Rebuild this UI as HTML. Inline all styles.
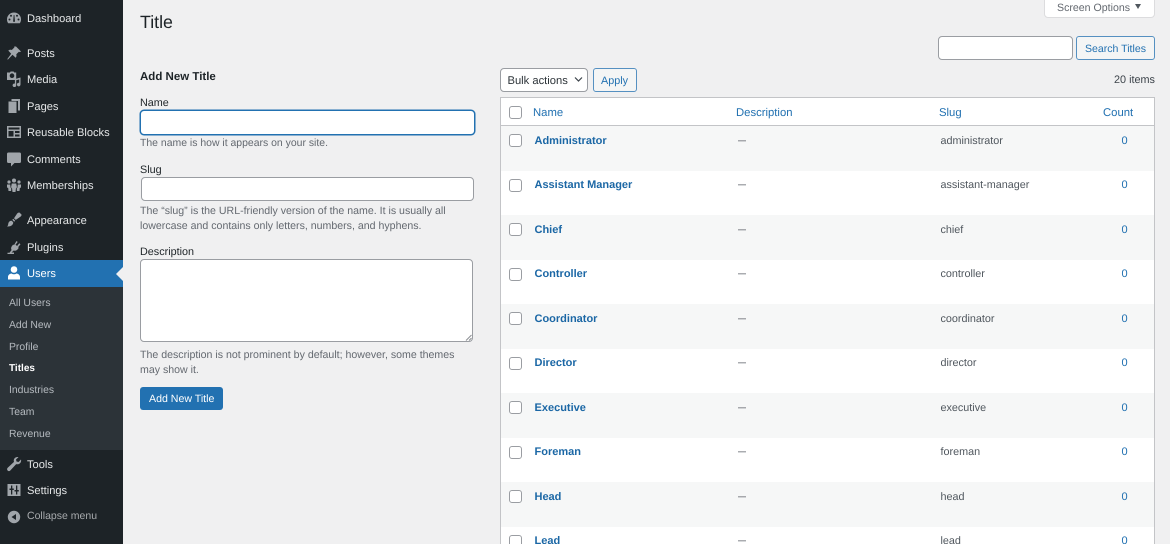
<!DOCTYPE html>
<html lang="en">
<head>
<meta charset="utf-8">
<title>Title</title>
<style>
html,body{margin:0;padding:0;width:1170px;height:544px;overflow:hidden;background:#f0f0f1;font-family:"Liberation Sans",sans-serif;color:#3c434a}
*{box-sizing:border-box}
#wrap{position:relative;width:1170px;height:544px;overflow:hidden;background:#f0f0f1;text-rendering:geometricPrecision;filter:blur(.35px)}
.t{position:absolute;white-space:nowrap;line-height:14px;font-size:11px;margin-top:1px}
#side{position:absolute;left:0;top:0;width:123px;height:544px;background:#1d2327}
#sub{position:absolute;left:0;top:287px;width:123px;height:163px;background:#2c3338}
#cur{position:absolute;left:0;top:260px;width:123px;height:27px;background:#2271b1}
#arrow{position:absolute;left:116px;top:267px;width:0;height:0;border:7px solid transparent;border-left:0;border-right:7px solid #f0f0f1}
.m{color:#e4e6e7;font-size:11.1px;left:27px}
.s{color:#b4b9be;font-size:10.4px;left:9px}
svg.i{position:absolute;left:6px;width:16px;height:16px;fill:#a0a5aa}
.box{position:absolute;background:#fff;border:1px solid #9a9da2;border-radius:4px}
.h{color:#646970;font-size:10.6px}
.lab{color:#1d2327;font-size:10.8px}
#tbl{position:absolute;left:500px;top:97px;width:655px;height:460px;background:#fff;border:1px solid #c3c4c7}
#hd{position:absolute;left:0;top:0;width:653px;height:28px;border-bottom:1px solid #c3c4c7;background:#fff}
.alt{position:absolute;left:501px;width:653px;height:44.5px;background:#f6f7f7}
.cb{position:absolute;left:509px;width:13px;height:13px;background:#fff;border:1px solid #9a9da2;border-radius:3px}
.n{left:534.5px;color:#1b67a5;font-weight:bold;font-size:11px}
.d{left:738px;color:#646970;font-size:8px;font-weight:bold}
.g{left:940.5px;color:#50575e;font-size:10.8px}
.c{left:1121.5px;color:#2271b1;font-size:11px}
.hl{color:#2271b1;font-size:11.3px}
</style>
</head>
<body>
<div id="wrap">
<div id="side"></div>
<div id="sub"></div>
<div id="cur"></div>
<div id="arrow"></div>

<svg class="i" style="top:10px" viewBox="0 0 16 16"><path d="M8 2.500A7 7 0 0 0 1 9.500c0 1.500.4 2.700 1.200 3.700h11.600c.8-1 1.200-2.200 1.200-3.700a7 7 0 0 0-7-7zM3.500 10.500a1 1 0 1 1 0-2 1 1 0 0 1 0 2zM5 6.800a1 1 0 1 1 0-2 1 1 0 0 1 0 2zM9 11.800H7.100L7.700 5h.7zM11 6.800a1 1 0 1 1 0-2 1 1 0 0 1 0 2zM12.500 10.500a1 1 0 1 1 0-2 1 1 0 0 1 0 2z" fill-rule="evenodd"/></svg>
<div class="t m" style="top:11px">Dashboard</div>

<svg class="i" style="top:45px" viewBox="0 0 16 16"><path d="M10 1.500l5 5-1.200.6-.9-.4-2.600 2.600c.4 1.300.2 2.600-.6 3.500L6.500 9.700 2 14.500l-.8-.3 4-5.400L2.300 5.600c.9-.8 2.200-1 3.500-.6l2.600-2.600-.2-.9z"/></svg>
<div class="t m" style="top:46px">Posts</div>

<svg class="i" style="top:71px" viewBox="0 0 16 16"><path fill-rule="evenodd" d="M1 1.500h3l.6-1h3l.6 1h2v7.500H1zM6 7a2.300 2.300 0 1 0 0-4.600A2.300 2.300 0 0 0 6 7z"/><path d="M14.500 6.500v7a1.800 1.800 0 1 1-1.300-1.700V8.500l-3 .8v5a1.800 1.800 0 1 1-1.300-1.700v-4.500z"/></svg>
<div class="t m" style="top:72px">Media</div>

<svg class="i" style="top:98px" viewBox="0 0 16 16"><path d="M5.500 1H14v11.500h-2V3H5.500zM2.500 3.500H10.500V15H2.500z"/></svg>
<div class="t m" style="top:99px">Pages</div>

<svg class="i" style="top:124px" viewBox="0 0 16 16"><path fill-rule="evenodd" d="M1 2h14v12H1zM2.500 3.500v2h11v-2zM2.500 7v5.500h5V7zM9 7v2h4.500V7zM9 10.500v2h4.500v-2z"/></svg>
<div class="t m" style="top:125px">Reusable Blocks</div>

<svg class="i" style="top:151px" viewBox="0 0 16 16"><path d="M2.500 1.500h11A1.500 1.500 0 0 1 15 3v7.500a1.500 1.500 0 0 1-1.500 1.500H8.500L5 15.500V12H2.500A1.500 1.500 0 0 1 1 10.500V3a1.500 1.500 0 0 1 1.500-1.500z"/></svg>
<div class="t m" style="top:152px">Comments</div>

<svg class="i" style="top:177px" viewBox="0 0 16 16"><circle cx="8" cy="3.500" r="2"/><circle cx="3" cy="5" r="1.600"/><circle cx="13" cy="5" r="1.600"/><path d="M5.800 6.500h4.400l.8 4-1 .5-.5 4H6.500l-.5-4-1-.5zM1 7.500h3.200l.4 3.300.7.500-.2 2.700H2.500l-.3-3-1.200-.5zM15 7.500h-3.200l-.4 3.300-.7.500.2 2.700h2.600l.3-3 1.200-.5z"/></svg>
<div class="t m" style="top:178px">Memberships</div>

<svg class="i" style="top:212px" viewBox="0 0 16 16"><path d="M15.500 2.500c.3.700-.4 1.800-1.300 2.400L9.800 7.900 8 6.200 11 1.800c.6-.9 1.800-1.500 2.500-1.200zM7.300 6.800l1.900 1.900-1 1-1.900-1.900zM5.700 8.800l1.500 1.500c.2 2-1.500 4.500-6.200 4.200 1.400-1.100 1-2.100 1.400-3.400.4-1.300 1.700-2.400 3.300-2.300z"/></svg>
<div class="t m" style="top:213px">Appearance</div>

<svg class="i" style="top:239px" viewBox="0 0 16 16"><path d="M10.500 2l1.200 1-2.200 2.700 1.600 1.300 2.200-2.700 1.200 1-2.400 3 .7.600-1.300 1.600c-1 1.200-2.500 1.500-3.800 1L5.500 13.500H8V15H1.500v-1.200h2L5.600 11c-.7-1.100-.7-2.700.3-3.900l1.300-1.600.8.600z"/></svg>
<div class="t m" style="top:240px">Plugins</div>

<svg class="i" style="top:265px;fill:#fff" viewBox="0 0 16 16"><circle cx="8" cy="4.500" r="3.300"/><path d="M5.500 8.500c1.500 1 3.500 1 5 0 1.800.2 3.500 1.500 3.500 3.500v2.500H2V12c0-2 1.700-3.300 3.500-3.500z"/></svg>
<div class="t m" style="top:266px;color:#fff">Users</div>

<div class="t s" style="top:296px">All Users</div>
<div class="t s" style="top:318px">Add New</div>
<div class="t s" style="top:340px">Profile</div>
<div class="t s" style="top:361px;color:#fff;font-weight:bold;font-size:10px">Titles</div>
<div class="t s" style="top:383px">Industries</div>
<div class="t s" style="top:405px">Team</div>
<div class="t s" style="top:427px">Revenue</div>

<svg class="i" style="top:456px" viewBox="0 0 16 16"><path d="M15 3.500c.4 1.600-.1 3.100-1.300 4-1 .8-2.300 1-3.500.6L4.300 14.500c-.8.800-2 .8-2.700 0-.7-.7-.7-1.900.1-2.700L8 5.900C7.500 4.700 7.700 3.300 8.600 2.300 9.500 1.200 11 .7 12.500 1.100L10 3.500l.5 2 2 .5z"/></svg>
<div class="t m" style="top:457px">Tools</div>

<svg class="i" style="top:482px" viewBox="0 0 16 16"><path fill-rule="evenodd" d="M1.500 2h13v12h-13zM5 3.500v3H3.500V8H5v4.500h1.300V8h1.500V6.500H6.300v-3zM10 3.500V8H8.500v1.500H10v3h1.300v-3h1.500V8h-1.500V3.500z"/></svg>
<div class="t m" style="top:483px">Settings</div>

<svg class="i" style="top:509px" viewBox="0 0 16 16"><path fill-rule="evenodd" d="M8 1.800a6.200 6.200 0 1 1 0 12.400A6.200 6.200 0 0 1 8 1.800zM10 5L5.500 8 10 11z"/></svg>
<div class="t" style="left:27px;top:508px;color:#a7aaad;font-size:10.5px">Collapse menu</div>

<!-- header -->
<div class="t" style="left:140px;top:11px;margin-top:0;line-height:22px;font-size:17.8px;color:#1d2327">Title</div>
<div style="position:absolute;left:1044px;top:-4px;width:111px;height:22px;background:#fff;border:1px solid #dcdcde;border-radius:0 0 4px 4px"></div>
<div class="t" style="left:1057px;top:0;color:#646970;font-size:10.6px">Screen Options</div>
<div style="position:absolute;left:1135px;top:4px;width:0;height:0;border-left:3.500px solid transparent;border-right:3.500px solid transparent;border-top:5px solid #50575e"></div>

<div class="box" style="left:938px;top:36px;width:135px;height:24px"></div>
<div style="position:absolute;left:1076px;top:36px;width:79px;height:24px;background:#f6f7f7;border:1px solid #2271b1;border-radius:3px;opacity:.75"></div>
<div class="t hl" style="left:1085px;top:41px;font-size:10.55px">Search Titles</div>
<div class="t" style="left:1114px;top:72px;font-size:10.85px">20 items</div>

<!-- form -->
<div class="t" style="left:140px;top:69px;font-size:11.5px;font-weight:bold;color:#1d2327">Add New Title</div>
<div class="t lab" style="left:140px;top:95px">Name</div>
<div style="position:absolute;left:140px;top:110px;width:335px;height:25px;background:#fff;border:1.500px solid #2271b1;border-radius:4px;box-shadow:0 0 0 .5px #2271b1"></div>
<div class="t h" style="left:140px;top:136px;font-size:10.45px">The name is how it appears on your site.</div>

<div class="t lab" style="left:140px;top:162px">Slug</div>
<div class="box" style="left:141px;top:177px;width:333px;height:24px"></div>
<div class="t h" style="left:140px;top:203px">The “slug” is the URL-friendly version of the name. It is usually all</div>
<div class="t h" style="left:140px;top:218px">lowercase and contains only letters, numbers, and hyphens.</div>

<div class="t lab" style="left:140px;top:244px">Description</div>
<div class="box" style="left:140px;top:259px;width:333px;height:83px"></div>
<svg style="position:absolute;left:465px;top:334px;width:7px;height:7px" viewBox="0 0 7 7"><path d="M1 6.500L6.500 1M4 6.500L6.500 4" stroke="#8c8f94" stroke-width="1" fill="none"/></svg>
<div class="t h" style="left:140px;top:347px">The description is not prominent by default; however, some themes</div>
<div class="t h" style="left:140px;top:362px">may show it.</div>

<div style="position:absolute;left:140px;top:387px;width:83px;height:23px;background:#2271b1;border-radius:3px"></div>
<div class="t" style="left:149px;top:391px;color:#fff;font-size:10.6px">Add New Title</div>

<!-- bulk -->
<div class="box" style="left:500px;top:68px;width:88px;height:24px"></div>
<div class="t" style="left:507.5px;top:73px;color:#2c3338;font-size:11.2px">Bulk actions</div>
<svg style="position:absolute;left:574px;top:76px;width:9px;height:7px" viewBox="0 0 9 7"><path d="M1 1.500L4.500 5 8 1.500" stroke="#3c434a" stroke-width="1.200" fill="none"/></svg>
<div style="position:absolute;left:593px;top:68px;width:44px;height:24px;background:#f6f7f7;border:1px solid #2271b1;border-radius:3px;opacity:.75"></div>
<div class="t hl" style="left:601px;top:73px;font-size:10.8px">Apply</div>

<!-- table -->
<div id="tbl"><div id="hd"></div></div>
<div class="t hl" style="left:533px;top:104.500px">Name</div>
<div class="t hl" style="left:736px;top:104.500px">Description</div>
<div class="t hl" style="left:939px;top:104.500px">Slug</div>
<div class="t hl" style="left:1103px;top:104.500px">Count</div>
<div class="cb" style="top:106px"></div>

<div class="alt" style="top:126px"></div>
<div class="alt" style="top:215px"></div>
<div class="alt" style="top:304px"></div>
<div class="alt" style="top:393px"></div>
<div class="alt" style="top:482px"></div>

<div class="cb" style="top:134px"></div><div class="t n" style="top:133px">Administrator</div><div class="t d" style="top:133px">—</div><div class="t g" style="top:133px">administrator</div><div class="t c" style="top:133px">0</div>
<div class="cb" style="top:179px"></div><div class="t n" style="top:177px">Assistant Manager</div><div class="t d" style="top:177px">—</div><div class="t g" style="top:177px">assistant-manager</div><div class="t c" style="top:177px">0</div>
<div class="cb" style="top:223px"></div><div class="t n" style="top:222px">Chief</div><div class="t d" style="top:222px">—</div><div class="t g" style="top:222px">chief</div><div class="t c" style="top:222px">0</div>
<div class="cb" style="top:268px"></div><div class="t n" style="top:266px">Controller</div><div class="t d" style="top:266px">—</div><div class="t g" style="top:266px">controller</div><div class="t c" style="top:266px">0</div>
<div class="cb" style="top:312px"></div><div class="t n" style="top:311px">Coordinator</div><div class="t d" style="top:311px">—</div><div class="t g" style="top:311px">coordinator</div><div class="t c" style="top:311px">0</div>
<div class="cb" style="top:357px"></div><div class="t n" style="top:355px">Director</div><div class="t d" style="top:355px">—</div><div class="t g" style="top:355px">director</div><div class="t c" style="top:355px">0</div>
<div class="cb" style="top:401px"></div><div class="t n" style="top:400px">Executive</div><div class="t d" style="top:400px">—</div><div class="t g" style="top:400px">executive</div><div class="t c" style="top:400px">0</div>
<div class="cb" style="top:446px"></div><div class="t n" style="top:444px">Foreman</div><div class="t d" style="top:444px">—</div><div class="t g" style="top:444px">foreman</div><div class="t c" style="top:444px">0</div>
<div class="cb" style="top:490px"></div><div class="t n" style="top:489px">Head</div><div class="t d" style="top:489px">—</div><div class="t g" style="top:489px">head</div><div class="t c" style="top:489px">0</div>
<div class="cb" style="top:535px"></div><div class="t n" style="top:533px">Lead</div><div class="t d" style="top:533px">—</div><div class="t g" style="top:533px">lead</div><div class="t c" style="top:533px">0</div>
</div>
</body>
</html>
